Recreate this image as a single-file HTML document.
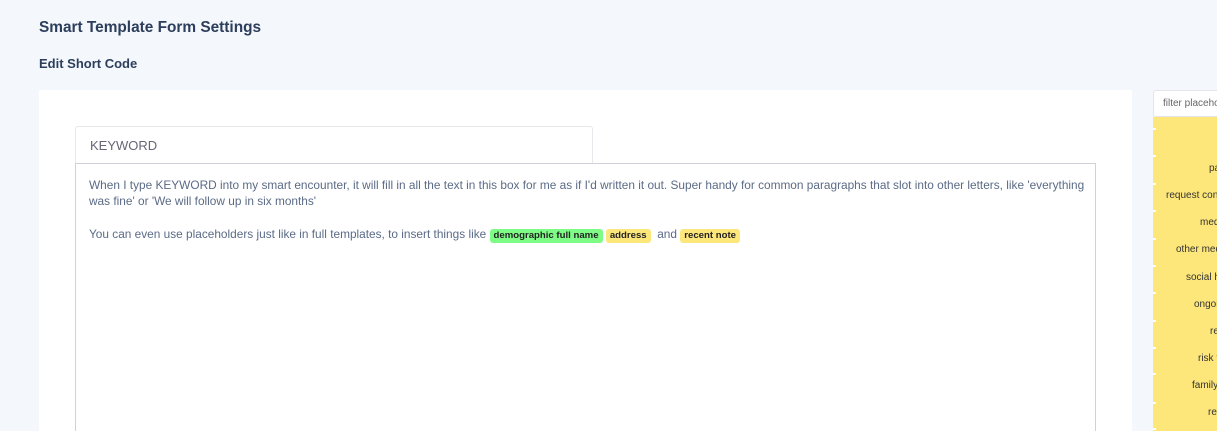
<!DOCTYPE html>
<html style="overflow:hidden;height:431px"><head><style>
body{margin:0;width:1217px;height:431px;overflow:hidden;background:#f4f7fb;font-family:"Liberation Sans",sans-serif;position:relative}
.a{position:absolute}
h1{position:absolute;left:39px;top:19px;margin:0;font-size:15.4px;font-weight:bold;color:#2c3e5c}
h2{position:absolute;left:39px;top:56px;margin:0;font-size:13px;font-weight:bold;color:#2c3e5c}
.panel{left:39px;top:90px;width:1093px;height:341px;background:#fff}
.kw{left:75px;top:126px;height:37px;border:1px solid #e6e8ec;border-bottom:none;border-radius:3px 3px 0 0;background:#fff;font-size:13px;color:#667;line-height:38px;padding-left:14px;box-sizing:border-box;width:518px}
.ta{left:75px;top:163px;width:1021px;height:268px;border:1px solid #cfd2d6;border-bottom:none;box-sizing:border-box;background:#fff}
.t{font-size:11.85px;color:#5b6b86;left:89px;white-space:nowrap}
.tag{display:inline-block;font-size:9.6px;font-weight:bold;color:#222;padding:1px 4px;border-radius:3px;line-height:12px}
.g{background:#7dfc86}.y{background:#fde77a}
.filter{left:1153px;top:90px;width:80px;height:27px;border:1px solid #e3e5e9;border-radius:3px;background:#fff;box-sizing:border-box;font-size:10px;color:#666;line-height:26px;padding-left:9px;white-space:nowrap;overflow:hidden}
.side{left:1153px;top:117px;width:64px;height:314px;background:#fde77a}
.n{left:1153px;width:3px;height:2px;background:#fff}
.s{font-size:10px;color:#333;white-space:nowrap}
</style></head><body>
<h1>Smart Template Form Settings</h1>
<h2>Edit Short Code</h2>
<div class="a panel"></div>
<div class="a kw">KEYWORD</div>
<div class="a ta"></div>
<div class="a t" style="top:178px">When I type KEYWORD into my smart encounter, it will fill in all the text in this box for me as if I'd written it out. Super handy for common paragraphs that slot into other letters, like 'everything</div>
<div class="a t" style="top:194px">was fine' or 'We will follow up in six months'</div>
<div class="a t" style="top:227px">You can even use placeholders just like in full templates, to insert things like <span class="tag g">demographic full name</span> <span class="tag y">address</span>&nbsp; and <span class="tag y">recent note</span></div>
<div class="a filter">filter placeholders</div>
<div class="a side"></div>
<div class="a n" style="top:128px"></div><div class="a n" style="top:155px"></div><div class="a n" style="top:183px"></div><div class="a n" style="top:210px"></div><div class="a n" style="top:238px"></div><div class="a n" style="top:265px"></div><div class="a n" style="top:292px"></div><div class="a n" style="top:320px"></div><div class="a n" style="top:347px"></div><div class="a n" style="top:373px"></div><div class="a n" style="top:402px"></div><div class="a n" style="top:428px"></div>
<div class="a s" style="left:1209px;top:163px">past history</div>
<div class="a s" style="left:1166px;top:190px">request consent</div>
<div class="a s" style="left:1200px;top:217px">medications</div>
<div class="a s" style="left:1176px;top:244px">other medications</div>
<div class="a s" style="left:1186px;top:272px">social history</div>
<div class="a s" style="left:1194px;top:299px">ongoing problems</div>
<div class="a s" style="left:1210px;top:326px">recent note</div>
<div class="a s" style="left:1198px;top:353px">risk factors</div>
<div class="a s" style="left:1192px;top:380px">family history</div>
<div class="a s" style="left:1208px;top:407px">referrals</div>
</body></html>
